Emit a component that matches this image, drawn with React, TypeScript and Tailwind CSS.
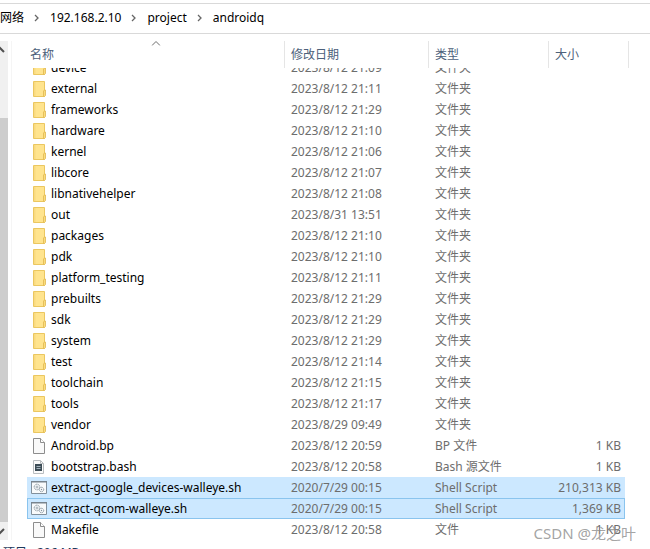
import React from "react";

type Kind = "folder" | "file" | "bash" | "script";
type Entry = { name: string; date: string; type: string; size?: string; kind: Kind };

const folder = (name: string, date: string): Entry => ({ name, date, type: "文件夹", kind: "folder" });

const entries: Entry[] = [
  folder("external", "2023/8/12 21:11"),
  folder("frameworks", "2023/8/12 21:29"),
  folder("hardware", "2023/8/12 21:10"),
  folder("kernel", "2023/8/12 21:06"),
  folder("libcore", "2023/8/12 21:07"),
  folder("libnativehelper", "2023/8/12 21:08"),
  folder("out", "2023/8/31 13:51"),
  folder("packages", "2023/8/12 21:10"),
  folder("pdk", "2023/8/12 21:10"),
  folder("platform_testing", "2023/8/12 21:11"),
  folder("prebuilts", "2023/8/12 21:29"),
  folder("sdk", "2023/8/12 21:29"),
  folder("system", "2023/8/12 21:29"),
  folder("test", "2023/8/12 21:14"),
  folder("toolchain", "2023/8/12 21:15"),
  folder("tools", "2023/8/12 21:17"),
  folder("vendor", "2023/8/29 09:49"),
  { name: "Android.bp", date: "2023/8/12 20:59", type: "BP 文件", size: "1 KB", kind: "file" },
  { name: "bootstrap.bash", date: "2023/8/12 20:58", type: "Bash 源文件", size: "1 KB", kind: "bash" },
  { name: "extract-google_devices-walleye.sh", date: "2020/7/29 00:15", type: "Shell Script", size: "210,313 KB", kind: "script" },
  { name: "extract-qcom-walleye.sh", date: "2020/7/29 00:15", type: "Shell Script", size: "1,369 KB", kind: "script" },
  { name: "Makefile", date: "2023/8/12 20:58", type: "文件", size: "1 KB", kind: "file" },
];

const focusedName = "extract-qcom-walleye.sh";

function EntryIcon({ kind }: { kind: Kind }) {
  if (kind === "folder") {
    return (
      <svg width="16" height="16" viewBox="0 0 16 16" className="shrink-0" aria-hidden="true">
        <path d="M2.5 0.5h11v15h-11z" fill="#ffe48e" stroke="#ebc760" />
        <path d="M3 1h1.5v14H3z" fill="#f9da80" />
        <path d="M12.5 10l1-1h1v5.5l-1 1h-1z" fill="#fbdc7c" stroke="#dfb850" strokeWidth="0.8" />
      </svg>
    );
  }
  if (kind === "script") {
    return (
      <svg width="16" height="16" viewBox="0 0 16 16" className="shrink-0" aria-hidden="true">
        <path d="M0.5 1.5h15v12H0.5z" fill="#f8fafb" stroke="#82909c" />
        <path d="M0 1h16v1.5H0z" fill="#78848e" />
        <circle cx="6" cy="7" r="2.8" fill="none" stroke="#84929c" strokeDasharray="1.2 0.5" />
        <circle cx="6" cy="7" r="1" fill="none" stroke="#84929c" strokeWidth="0.7" />
        <circle cx="10.5" cy="9.5" r="2.2" fill="#f8fafb" stroke="#84929c" strokeDasharray="1.2 0.5" />
        <circle cx="10.5" cy="9.5" r="0.7" fill="#84929c" />
      </svg>
    );
  }
  if (kind === "bash") {
    return (
      <svg width="16" height="16" viewBox="0 0 16 16" className="shrink-0" aria-hidden="true">
        <path d="M2.5 1.5h7l3 3v10h-10z" fill="#fafafa" stroke="#b9bdc0" />
        <path d="M9.5 1.5v3h3" fill="none" stroke="#b9bdc0" />
        <path d="M4 5h7v7H4z" fill="#3c4c56" />
        <path d="M5.5 7.5h4M5.5 9.5h4" stroke="#a5b4bd" />
      </svg>
    );
  }
  return (
    <svg width="16" height="16" viewBox="0 0 16 16" className="shrink-0" aria-hidden="true">
      <path d="M2.5 0.5h7l4 4v11h-11z" fill="#f9f9f9" stroke="#8d8d8d" />
      <path d="M9.5 0.5v4h4" fill="#fff" stroke="#8d8d8d" />
    </svg>
  );
}

function Separator() {
  return (
    <span className="flex w-[26px] justify-center">
      <svg width="6" height="8" viewBox="0 0 6 8" className="shrink-0" aria-hidden="true">
        <path d="M1 1l3 3-3 3" fill="none" stroke="#666" strokeWidth="1.3" />
      </svg>
    </span>
  );
}

function Row({ entry }: { entry: Entry }) {
  const selected = entry.kind === "script";
  const focused = entry.name === focusedName;
  const tone = focused
    ? "bg-[#cce8ff] border-y border-[#8ac4ee]"
    : selected
      ? "bg-[#cce8ff]"
      : "";
  return (
    <tr className="h-[21px]" aria-selected={selected}>
      <td className={`p-0 ${tone} ${focused ? "border-l" : ""}`}>
        <div className={`flex items-center gap-1 text-black ${focused ? "pl-[3px]" : "pl-1"}`}>
          <EntryIcon kind={entry.kind} />
          {entry.name}
        </div>
      </td>
      <td className={`p-0 pl-1.5 ${tone}`}>{entry.date}</td>
      <td className={`p-0 pl-1.5 ${tone}`}>{entry.type}</td>
      <td className={`p-0 text-right ${tone} ${focused ? "border-r pr-[3px]" : "pr-1"}`}>{entry.size}</td>
      <td className="p-0" />
    </tr>
  );
}

export default function App() {
  return (
    <main className="relative flex h-screen flex-col overflow-hidden bg-white font-['Noto_Sans','Noto_Sans_CJK_SC',sans-serif] text-xs leading-4 text-[#6d6d6d]">
      <nav aria-label="地址" className="mt-[3px] flex h-[31px] shrink-0 items-center border-y border-[#d9d9d9] pb-px text-black">
        <a href="#network">网络</a>
        <Separator />
        <a href="#host">192.168.2.10</a>
        <Separator />
        <a href="#project">project</a>
        <Separator />
        <a href="#androidq">androidq</a>
      </nav>

      <div className="mt-[7px] flex shrink-0">
        <div className="flex w-2 flex-col overflow-hidden bg-[#f0f0f0]">
          <button aria-label="向上滚动" className="flex h-[18px]">
            <svg width="8" height="18" viewBox="0 0 8 18" className="shrink-0">
              <path d="M-4 11l4-4 4 4" fill="none" stroke="#505050" strokeWidth="2" />
            </svg>
          </button>
          <div className="h-[59px]" />
          <div className="flex-1 bg-[#cdcdcd]" />
          <button aria-label="向下滚动" className="flex h-[18px]">
            <svg width="8" height="18" viewBox="0 0 8 18" className="shrink-0">
              <path d="M-4 7l4 4 4-4" fill="none" stroke="#505050" strokeWidth="2" />
            </svg>
          </button>
        </div>
        <div className="ml-[3px] flex-1 border-l border-[#f5f5f5] pl-[15px]">
          <table className="w-[602px] table-fixed border-separate border-spacing-0 whitespace-nowrap">
            <colgroup>
              <col className="w-[258px]" />
              <col className="w-[144px]" />
              <col className="w-[120px]" />
              <col className="w-[76px]" />
              <col className="w-1" />
            </colgroup>
            <thead className="text-left text-[#4c607a]">
              <tr className="h-[27px]">
                <th scope="col" aria-sort="ascending" className="relative border-r border-[#e5e5e5] p-0 pl-[3px] font-normal">
                  名称
                  <svg width="9" height="5" viewBox="0 0 9 5" className="absolute top-0 left-1/2 -translate-x-1/2" aria-hidden="true">
                    <path d="M0.5 4.5l4-4 4 4" fill="none" stroke="#6d6d6d" />
                  </svg>
                </th>
                <th scope="col" className="border-r border-[#e5e5e5] p-0 pl-1.5 font-normal">修改日期</th>
                <th scope="col" className="border-r border-[#e5e5e5] p-0 pl-1.5 font-normal">类型</th>
                <th scope="col" colSpan={2} className="border-r border-[#e5e5e5] p-0 pl-1.5 font-normal">大小</th>
              </tr>
            </thead>
            <tbody>
              <tr className="h-[10px]">
                <td className="p-0">
                  <div className="flex h-[10px] items-end gap-1 overflow-hidden pl-1 text-black">
                    <div className="pb-[3px]"><EntryIcon kind="folder" /></div>
                    <span className="pb-[2px]">device</span>
                  </div>
                </td>
                <td className="p-0 pl-1.5"><div className="flex h-[10px] items-end overflow-hidden pb-[2px]">2023/8/12 21:09</div></td>
                <td className="p-0 pl-1.5"><div className="flex h-[10px] items-end overflow-hidden pb-[2px]">文件夹</div></td>
                <td className="p-0" />
                <td className="p-0" />
              </tr>
              {entries.map((entry) => (
                <Row key={entry.name} entry={entry} />
              ))}
            </tbody>
          </table>
        </div>
      </div>

      <footer className="mt-[5px] flex shrink-0 text-[#1e395b]">
        <span className="flex w-[27px] justify-end"><span className="shrink-0">个项目</span></span>
        <span className="ml-[10px]">206 MB</span>
      </footer>

      <p className="absolute top-[521px] right-[14px] text-[15px] leading-6 text-[#8c8c8c]/80">CSDN @龙之叶</p>
    </main>
  );
}
